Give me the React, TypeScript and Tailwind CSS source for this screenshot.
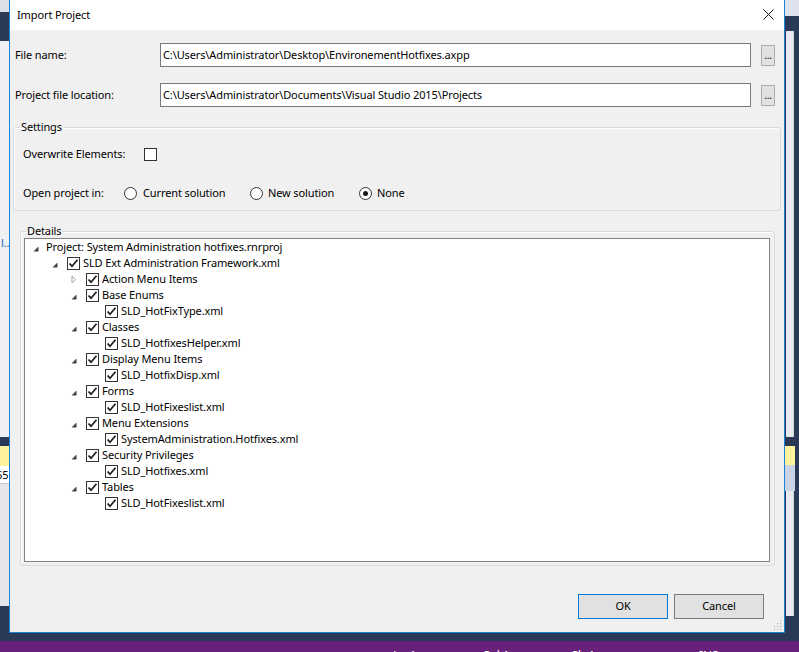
import React from 'react'

type Node = { level: number; label: string; arrow: 'open' | 'closed' | 'none'; check: boolean }

const tree: Node[] = [
  { level: 0, label: 'Project: System Administration hotfixes.rnrproj', arrow: 'open', check: false },
  { level: 1, label: 'SLD Ext Administration Framework.xml', arrow: 'open', check: true },
  { level: 2, label: 'Action Menu Items', arrow: 'closed', check: true },
  { level: 2, label: 'Base Enums', arrow: 'open', check: true },
  { level: 3, label: 'SLD_HotFixType.xml', arrow: 'none', check: true },
  { level: 2, label: 'Classes', arrow: 'open', check: true },
  { level: 3, label: 'SLD_HotfixesHelper.xml', arrow: 'none', check: true },
  { level: 2, label: 'Display Menu Items', arrow: 'open', check: true },
  { level: 3, label: 'SLD_HotfixDisp.xml', arrow: 'none', check: true },
  { level: 2, label: 'Forms', arrow: 'open', check: true },
  { level: 3, label: 'SLD_HotFixeslist.xml', arrow: 'none', check: true },
  { level: 2, label: 'Menu Extensions', arrow: 'open', check: true },
  { level: 3, label: 'SystemAdministration.Hotfixes.xml', arrow: 'none', check: true },
  { level: 2, label: 'Security Privileges', arrow: 'open', check: true },
  { level: 3, label: 'SLD_Hotfixes.xml', arrow: 'none', check: true },
  { level: 2, label: 'Tables', arrow: 'open', check: true },
  { level: 3, label: 'SLD_HotFixeslist.xml', arrow: 'none', check: true },
]

function CheckBox({ checked }: { checked: boolean }) {
  return (
    <span className="w-[13px] h-[13px] border border-[#333333] bg-white flex items-center justify-center shrink-0">
      {checked && (
        <svg width="11" height="11" viewBox="0 0 11 11">
          <path d="M1.5 5.5 L4 8.2 L9.5 1.8" fill="none" stroke="#1a1a1a" strokeWidth="1.7" />
        </svg>
      )}
    </span>
  )
}

function Radio({ checked }: { checked: boolean }) {
  return (
    <span className="w-[13px] h-[13px] rounded-full border border-[#333333] bg-white flex items-center justify-center shrink-0">
      {checked && <span className="w-[5px] h-[5px] rounded-full bg-[#1a1a1a]" />}
    </span>
  )
}

function Arrow({ kind }: { kind: Node['arrow'] }) {
  return (
    <span className="w-[16px] h-[16px] flex items-center justify-center shrink-0">
      {kind === 'open' && (
        <svg width="6" height="6" viewBox="0 0 6 6" className="mt-[2px]">
          <polygon points="5.5,0.5 5.5,5.5 0.5,5.5" fill="#404040" />
        </svg>
      )}
      {kind === 'closed' && (
        <svg width="6" height="9" viewBox="0 0 6 9">
          <polygon points="1,1 4.5,4.5 1,8" fill="none" stroke="#a6a6a6" strokeWidth="1" />
        </svg>
      )}
    </span>
  )
}

function PathRow({ label, value, top }: { label: string; value: string; top: string }) {
  return (
    <div className={`flex items-center h-[24px] ${top}`}>
      <span className="w-[145px]">{label}</span>
      <div className="w-[591px] h-[24px] border border-[#7a7a7a] bg-white flex items-center pl-[2px] pt-[1px]">{value}</div>
      <button className="ml-[10px] w-[14px] h-[21px] border border-[#adadad] bg-[#e1e1e1] text-[10px] leading-none flex items-end justify-center pb-[5px]">
        ...
      </button>
    </div>
  )
}

export default function App() {
  return (
    <div className="w-[799px] h-[652px] relative overflow-hidden bg-[#293956] flex flex-col font-['Segoe_UI','Noto_Sans',sans-serif] text-[11px] tracking-[-0.12px] text-black">
      {/* IDE behind the dialog */}
      <div className="flex-1 flex">
        <div className="w-[9px] flex flex-col">
          <div className="h-[12px] bg-[#dadfe8]" />
          <div className="h-[29px]" />
          <div className="h-[396px] bg-[#eef0f4] text-[#1e5fb4] pt-[194px] pl-[1px] overflow-hidden">l..</div>
          <div className="h-[9px]" />
          <div className="h-[20px] bg-[#fff29d]" />
          <div className="h-[17px] bg-white leading-[17px] overflow-hidden -indent-[4px]">65</div>
          <div className="h-[123px] bg-[#e4e6ea] border-t border-[#c9ced8]" />
        </div>
        <div className="flex-1" />
        <div className="w-[14px] flex flex-col">
          <div className="h-[16px] bg-[#dde2ec]" />
          <div className="h-[15px]" />
          <div className="h-[406px] w-[8px] ml-[1px] bg-[#e8e9ee] border-r border-[#cfd3db]" />
          <div className="h-[9px]" />
          <div className="h-[19px] w-[10px] bg-[#fff29d]" />
          <div className="h-[26px] w-[10px] bg-[#c9d3e3]" />
          <div className="h-[125px] w-[8px] ml-[1px] bg-[#e8e9ee] border-r border-[#cfd3db]" />
        </div>
      </div>
      <div className="h-[11px] bg-[#68217a] text-white flex overflow-hidden pt-[6px] text-[12px]">
        <span className="ml-[393px]">Ln 1</span>
        <span className="ml-[66px]">Col 1</span>
        <span className="ml-[61px]">Ch 1</span>
        <span className="ml-[104px]">INS</span>
      </div>

      {/* Dialog */}
      <div className="absolute left-[9px] top-0 w-[776px] h-[633px] border-x border-b border-[#1883d7] bg-[#f0f0f0] flex flex-col">
        <div className="h-[30px] bg-white flex items-center pl-[7px] pr-[10px]">
          <span className="flex-1">Import Project</span>
          <svg width="11" height="11" viewBox="0 0 11 11" className="mt-[-2px]">
            <path d="M0.5 0.5 L10.5 10.5 M10.5 0.5 L0.5 10.5" stroke="#111" strokeWidth="1" />
          </svg>
        </div>

        <div className="flex-1 flex flex-col pl-[5px] relative">
          <PathRow
            label="File name:"
            value="C:\Users\Administrator\Desktop\EnvironementHotfixes.axpp"
            top="mt-[13px]"
          />
          <PathRow
            label="Project file location:"
            value="C:\Users\Administrator\Documents\Visual Studio 2015\Projects"
            top="mt-[16px]"
          />

          <fieldset className="mt-[13px] ml-[-2px] mr-[3px] border border-[#d5dbe3] rounded-[3px] pl-[9px] pb-[9px] shadow-[inset_1px_1px_0_#ffffff]">
            <legend className="leading-[14px] px-[1px] ml-[-3px]">Settings</legend>
            <div className="flex items-center h-[16px] mt-[12px]">
              <span className="w-[121px]">Overwrite Elements:</span>
              <CheckBox checked={false} />
            </div>
            <div className="flex items-center h-[16px] mt-[23px]">
              <span className="w-[101px]">Open project in:</span>
              <Radio checked={false} />
              <span className="ml-[6px] w-[107px]">Current solution</span>
              <Radio checked={false} />
              <span className="ml-[5px] w-[91px]">New solution</span>
              <Radio checked={true} />
              <span className="ml-[5px]">None</span>
            </div>
          </fieldset>

          <fieldset className="mt-[13px] ml-[5px] mr-[9px] border border-[#d5dbe3] rounded-[3px] pl-[3px] pr-[4px] pb-[3px] shadow-[inset_1px_1px_0_#ffffff]">
            <legend className="leading-[14px] px-[1px] ml-[2px]">Details</legend>
            <div className="h-[324px] border border-[#828282] bg-white">
              {tree.map((n, i) => (
                <div key={i} className="flex items-center h-[16px] pt-[1px]" style={{ paddingLeft: 3 + n.level * 19 }}>
                  <Arrow kind={n.arrow} />
                  {n.level > 0 ? (
                    <>
                      <span className="ml-[4px]">
                        <CheckBox checked={n.check} />
                      </span>
                      <span className="ml-[3px] whitespace-nowrap">{n.label}</span>
                    </>
                  ) : (
                    <span className="ml-[2px] whitespace-nowrap">{n.label}</span>
                  )}
                </div>
              ))}
            </div>
          </fieldset>

          <div className="flex justify-end mt-[28px] mr-[20px] gap-[6px]">
            <button className="w-[90px] h-[25px] border border-[#0078d7] bg-[#e1e1e1]">OK</button>
            <button className="w-[90px] h-[25px] border border-[#7a7a7a] bg-[#e1e1e1]">Cancel</button>
          </div>

          <svg width="10" height="10" viewBox="0 0 10 10" className="absolute right-[2px] bottom-[2px]">
            {[
              [8, 0], [8, 3], [5, 3], [8, 6], [5, 6], [2, 6], [8, 9], [5, 9], [2, 9],
            ].map(([x, y], i) => (
              <rect key={i} x={x} y={y} width="1.2" height="1.2" fill="#b4b4b4" />
            ))}
          </svg>
        </div>
      </div>
    </div>
  )
}
